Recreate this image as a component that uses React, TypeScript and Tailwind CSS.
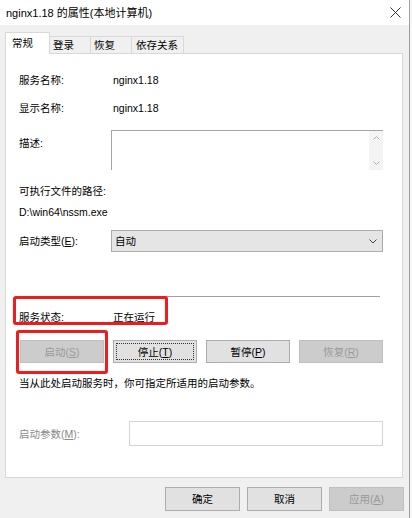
import React from 'react';

const font = "font-['Liberation_Sans','Noto_Sans_CJK_SC',sans-serif]";

const Key = ({ k }: { k: string }) => <span className="underline underline-offset-1">{k}</span>;

interface BtnProps {
  children: React.ReactNode;
  disabled?: boolean;
  focused?: boolean;
  className?: string;
}

const Btn = ({ children, disabled, focused, className }: BtnProps) => (
  <div
    className={
      'h-[23px] flex items-center justify-center border text-[10.5px] ' +
      (disabled
        ? 'bg-[#cccccc] border-[#bfbfbf] text-[#9a9a9a] '
        : 'bg-[#e1e1e1] border-[#adadad] text-black ') +
      (className ?? '')
    }
  >
    {focused ? (
      <div className="w-[calc(100%-4px)] h-[calc(100%-4px)] border border-dotted border-[#333] flex items-center justify-center">
        {children}
      </div>
    ) : (
      children
    )}
  </div>
);

const Row = ({ label, children }: { label: string; children?: React.ReactNode }) => (
  <div className="flex h-[20px] items-center">
    <div className="w-[92px]">{label}</div>
    <div className="pl-[2px]">{children}</div>
  </div>
);

export default function App() {
  return (
    <div className={`relative w-[412px] h-[518px] overflow-hidden flex bg-[#f7f7f7] text-[10.5px] leading-[20px] text-black ${font}`}>
      <div className="w-[409px] h-full flex flex-col bg-[#f0f0f0]">
        {/* title bar */}
        <div className="h-[25px] bg-white flex items-center justify-between pl-[6px] pr-[8px]">
          <span className="text-[11px]">nginx1.18 的属性(本地计算机)</span>
          <svg width="11" height="11" viewBox="0 0 11 11" className="text-[#333]">
            <path d="M0.5 0.5 L10.5 10.5 M10.5 0.5 L0.5 10.5" stroke="currentColor" strokeWidth="1" />
          </svg>
        </div>

        {/* tabs */}
        <div className="flex items-end pl-[5px] mt-[7px] h-[21px] relative z-10">
          <div className="w-[45px] h-[22px] -mb-px bg-white border border-b-0 border-[#d9d9d9] pl-[6px] leading-[20px]">常规</div>
          <div className="w-[41px] h-[17px] bg-[#f0f0f0] border border-l-0 border-b-0 border-[#d9d9d9] pl-[3px] leading-[17px]">登录</div>
          <div className="w-[41px] h-[17px] bg-[#f0f0f0] border border-l-0 border-b-0 border-[#d9d9d9] pl-[3px] leading-[17px]">恢复</div>
          <div className="w-[52px] h-[17px] bg-[#f0f0f0] border border-l-0 border-b-0 border-[#d9d9d9] pl-[4px] leading-[17px]">依存关系</div>
        </div>

        {/* panel */}
        <div className="ml-[5px] w-[398px] h-[425px] bg-white border border-[#d9d9d9] pl-[13px] pt-[16px]">
          <Row label="服务名称:">nginx1.18</Row>
          <div className="mt-[8px]">
            <Row label="显示名称:">nginx1.18</Row>
          </div>

          <div className="mt-[12px] flex h-[40px]">
            <div className="w-[92px] pt-[3px]">描述:</div>
            <div className="w-[272px] h-[40px] border-t border-l border-[#a5a5a5] flex justify-end">
              <div className="w-[14px] h-full bg-[#f4f4f4] flex flex-col items-center justify-between py-[5px]">
                <svg width="7" height="4" viewBox="0 0 7 4">
                  <path d="M0.5 3.5 L3.5 0.5 L6.5 3.5" stroke="#b0b0b0" fill="none" strokeWidth="1" />
                </svg>
                <svg width="7" height="4" viewBox="0 0 7 4">
                  <path d="M0.5 0.5 L3.5 3.5 L6.5 0.5" stroke="#b0b0b0" fill="none" strokeWidth="1" />
                </svg>
              </div>
            </div>
          </div>

          <div className="mt-[11px] h-[20px] flex items-center">可执行文件的路径:</div>
          <div className="mt-[1px] h-[20px] flex items-center">D:\win64\nssm.exe</div>

          <div className="mt-[8px] flex h-[22px] items-center">
            <div className="w-[92px]">
              启动类型(<Key k="E" />):
            </div>
            <div className="w-[272px] h-[22px] bg-[#e5e5e5] border border-[#acacac] flex items-center justify-between pl-[3px] pr-[5px]">
              <span>自动</span>
              <svg width="8" height="5" viewBox="0 0 8 5">
                <path d="M0.5 0.5 L4 4 L7.5 0.5" stroke="#444" fill="none" strokeWidth="1" />
              </svg>
            </div>
          </div>

          <div className="mt-[44px] h-px w-[361px] bg-[#a0a0a0]" />

          <div className="mt-[10px]">
            <Row label="服务状态:">正在运行</Row>
          </div>

          <div className="mt-[13px] flex gap-[9px] pl-[1px]">
            <Btn disabled className="w-[84px]">
              <span>启动(<Key k="S" />)</span>
            </Btn>
            <Btn focused className="w-[84px]">
              <span>停止(<Key k="T" />)</span>
            </Btn>
            <Btn className="w-[84px]">
              <span>暂停(<Key k="P" />)</span>
            </Btn>
            <Btn disabled className="w-[84px]">
              <span>恢复(<Key k="R" />)</span>
            </Btn>
          </div>

          <div className="mt-[10px] h-[20px] flex items-center">当从此处启动服务时，你可指定所适用的启动参数。</div>

          <div className="mt-[28px] flex h-[25px] items-center">
            <div className="w-[110px] text-[#8a8a8a]">
              启动参数(<Key k="M" />):
            </div>
            <div className="w-[254px] h-[25px] bg-white border border-[#d4d4d4]" />
          </div>
        </div>

        {/* bottom buttons */}
        <div className="mt-[9px] flex justify-end gap-[7px] pr-[5px]">
          <Btn className="w-[75px] h-[24px]">确定</Btn>
          <Btn className="w-[75px] h-[24px]">取消</Btn>
          <Btn disabled className="w-[75px] h-[24px]">
            <span>应用(<Key k="A" />)</span>
          </Btn>
        </div>
      </div>
      <div className="w-[1px] h-full bg-[#9e9e9e]" />

      {/* red annotation boxes */}
      <div className="absolute left-[13px] top-[296px] w-[155px] h-[29px] border-[3px] border-[#ee1c1c] rounded-[3px]" />
      <div className="absolute left-[16px] top-[330px] w-[92px] h-[44px] border-[3px] border-[#ee1c1c] rounded-[3px]" />
    </div>
  );
}
